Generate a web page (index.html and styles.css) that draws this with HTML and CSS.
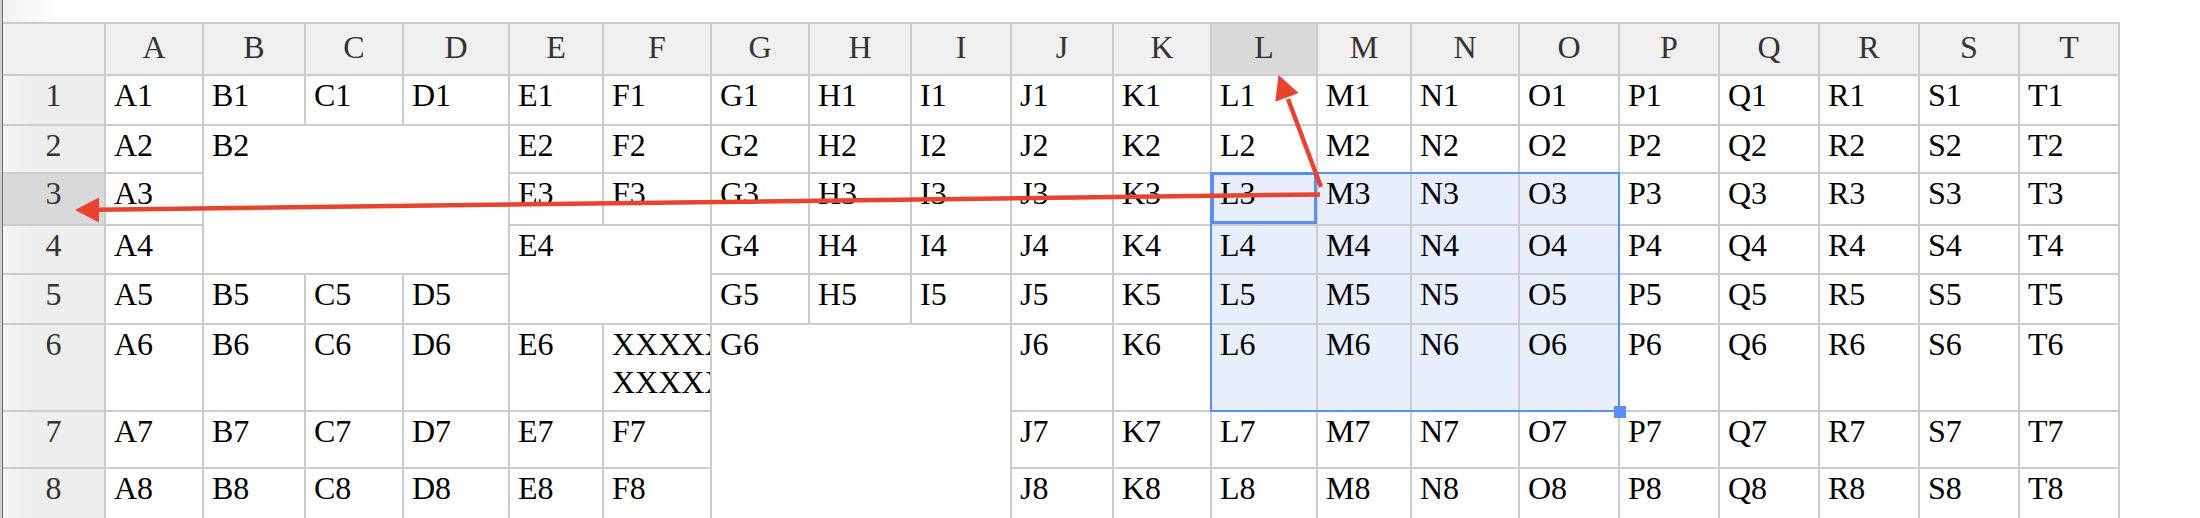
FILE: index.html
```html
<!DOCTYPE html>
<html>
<head>
<meta charset="utf-8">
<link rel="stylesheet" href="styles.css">
</head>
<body>
<div class="page">
  <div class="edge"></div>
  <div class="content">
    <div class="sheet">
      <div class="corner"></div>
      <div class="ch">A</div><div class="ch">B</div><div class="ch">C</div><div class="ch">D</div><div class="ch">E</div><div class="ch">F</div><div class="ch">G</div><div class="ch">H</div><div class="ch">I</div><div class="ch">J</div><div class="ch">K</div><div class="ch ch-on">L</div><div class="ch">M</div><div class="ch">N</div><div class="ch">O</div><div class="ch">P</div><div class="ch">Q</div><div class="ch">R</div><div class="ch">S</div><div class="ch">T</div>

      <div class="rh">1</div>
      <div class="c">A1</div><div class="c">B1</div><div class="c">C1</div><div class="c">D1</div><div class="c">E1</div><div class="c">F1</div><div class="c">G1</div><div class="c">H1</div><div class="c">I1</div><div class="c">J1</div><div class="c">K1</div><div class="c">L1</div><div class="c">M1</div><div class="c">N1</div><div class="c">O1</div><div class="c">P1</div><div class="c">Q1</div><div class="c">R1</div><div class="c">S1</div><div class="c">T1</div>

      <div class="rh">2</div>
      <div class="c">A2</div><div class="c merge-b2">B2</div><div class="c">E2</div><div class="c">F2</div><div class="c">G2</div><div class="c">H2</div><div class="c">I2</div><div class="c">J2</div><div class="c">K2</div><div class="c">L2</div><div class="c">M2</div><div class="c">N2</div><div class="c">O2</div><div class="c">P2</div><div class="c">Q2</div><div class="c">R2</div><div class="c">S2</div><div class="c">T2</div>

      <div class="rh rh-on">3</div>
      <div class="c">A3</div><div class="c">E3</div><div class="c">F3</div><div class="c">G3</div><div class="c">H3</div><div class="c">I3</div><div class="c">J3</div><div class="c">K3</div><div class="c sel">L3</div><div class="c sel">M3</div><div class="c sel">N3</div><div class="c sel">O3</div><div class="c">P3</div><div class="c">Q3</div><div class="c">R3</div><div class="c">S3</div><div class="c">T3</div>

      <div class="rh">4</div>
      <div class="c">A4</div><div class="c merge-e4">E4</div><div class="c">G4</div><div class="c">H4</div><div class="c">I4</div><div class="c">J4</div><div class="c">K4</div><div class="c sel">L4</div><div class="c sel">M4</div><div class="c sel">N4</div><div class="c sel">O4</div><div class="c">P4</div><div class="c">Q4</div><div class="c">R4</div><div class="c">S4</div><div class="c">T4</div>

      <div class="rh">5</div>
      <div class="c">A5</div><div class="c">B5</div><div class="c">C5</div><div class="c">D5</div><div class="c">G5</div><div class="c">H5</div><div class="c">I5</div><div class="c">J5</div><div class="c">K5</div><div class="c sel">L5</div><div class="c sel">M5</div><div class="c sel">N5</div><div class="c sel">O5</div><div class="c">P5</div><div class="c">Q5</div><div class="c">R5</div><div class="c">S5</div><div class="c">T5</div>

      <div class="rh">6</div>
      <div class="c">A6</div><div class="c">B6</div><div class="c">C6</div><div class="c">D6</div><div class="c">E6</div><div class="c">XXXXXXXXXX XXXXXXXXXX</div><div class="c merge-g6">G6</div><div class="c">J6</div><div class="c">K6</div><div class="c sel">L6</div><div class="c sel">M6</div><div class="c sel">N6</div><div class="c sel">O6</div><div class="c">P6</div><div class="c">Q6</div><div class="c">R6</div><div class="c">S6</div><div class="c">T6</div>

      <div class="rh">7</div>
      <div class="c">A7</div><div class="c">B7</div><div class="c">C7</div><div class="c">D7</div><div class="c">E7</div><div class="c">F7</div><div class="c">J7</div><div class="c">K7</div><div class="c">L7</div><div class="c">M7</div><div class="c">N7</div><div class="c">O7</div><div class="c">P7</div><div class="c">Q7</div><div class="c">R7</div><div class="c">S7</div><div class="c">T7</div>

      <div class="rh">8</div>
      <div class="c">A8</div><div class="c">B8</div><div class="c">C8</div><div class="c">D8</div><div class="c">E8</div><div class="c">F8</div><div class="c">J8</div><div class="c">K8</div><div class="c">L8</div><div class="c">M8</div><div class="c">N8</div><div class="c">O8</div><div class="c">P8</div><div class="c">Q8</div><div class="c">R8</div><div class="c">S8</div><div class="c">T8</div>

      <div class="selection"><span class="handle"></span></div>
      <div class="active"></div>
    </div>
  </div>
  <svg class="arrows" width="2200" height="518" viewBox="0 0 2200 518">
    <g fill="#e8432d" stroke="#e8432d">
      <line x1="1320" y1="194.5" x2="97" y2="209.7" stroke-width="4.5"/>
      <polygon points="75,210 99,197.5 99,222.5" stroke="none"/>
      <line x1="1321" y1="187" x2="1288" y2="99" stroke-width="4.5"/>
      <polygon points="1278.5,75 1298.7,93 1275.3,101.8" stroke="none"/>
    </g>
  </svg>
</div>
</body>
</html>
```

FILE: styles.css
```css
html, body {
  margin: 0;
  padding: 0;
  background: #ffffff;
}

body {
  width: 2200px;
  height: 518px;
  overflow: hidden;
}

.page {
  position: relative;
  display: flex;
  height: 518px;
  overflow: hidden;
}

.edge {
  width: 3px;
  flex: none;
  background: linear-gradient(to right, #cfcfcf 0 2px, #6c6c6c 2px 3px);
}

.content {
  flex: 1;
  padding-top: 22px;
  background: linear-gradient(to right, #f2f2f2 0, #ffffff 60px);
}

.sheet {
  position: relative;
  display: grid;
  width: max-content;
  grid-template-columns: 101px 96px 100px 96px 104px 92px 106px 96px 100px 98px 100px 96px 104px 92px 106px 98px 98px 98px 98px 98px 98px;
  grid-template-rows: 50px 48px 46px 50px 47px 48px 85px 55px 60px;
  gap: 2px;
  padding: 2px 2px 0 0;
  background: #cccccc;
  font-family: "Liberation Serif", "Times New Roman", serif;
  font-size: 32px;
  line-height: 1.2;
  color: #000000;
}

.corner,
.ch,
.rh {
  background: #f0f0f0;
  color: #333333;
  text-align: center;
}

.rh {
  background: linear-gradient(to right, #f4f4f4 0, #eeeeee 30px);
}

.ch {
  padding-top: 4px;
}

.ch-on,
.rh-on {
  background: #d9d9d9;
}

.c {
  background: #ffffff;
  padding: 0 6px 0 8px;
  overflow: hidden;
  white-space: normal;
  word-break: normal;
}

.c.sel {
  background: #e8eefb;
}

.merge-b2 {
  grid-column: 3 / span 3;
  grid-row: 3 / span 3;
}

.merge-e4 {
  grid-column: 6 / span 2;
  grid-row: 5 / span 2;
}

.merge-g6 {
  grid-column: 8 / span 3;
  grid-row: 7 / span 3;
}

.selection {
  position: absolute;
  grid-column: 13 / span 4;
  grid-row: 4 / span 4;
  top: -2px;
  left: -2px;
  right: -2px;
  bottom: -2px;
  border: 2px solid #5b8ef5;
  pointer-events: none;
}

.handle {
  position: absolute;
  right: -8px;
  bottom: -8px;
  width: 12px;
  height: 12px;
  background: #5b8ef5;
}

.active {
  position: absolute;
  grid-column: 13 / span 1;
  grid-row: 4 / span 1;
  top: -2px;
  left: -1px;
  right: -1px;
  bottom: 0;
  border: 3px solid #5b8ef5;
  pointer-events: none;
}

.arrows {
  position: absolute;
  left: 0;
  top: 0;
  pointer-events: none;
}
```
